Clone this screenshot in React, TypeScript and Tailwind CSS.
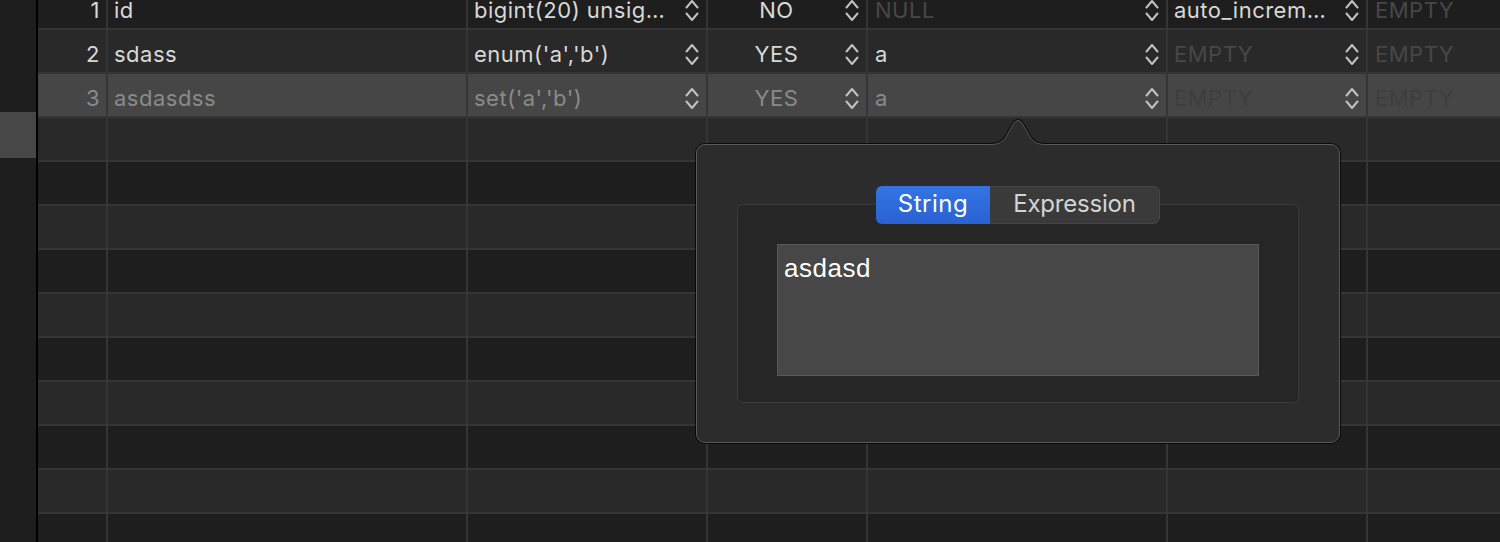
import React from "react";

type Cell = { text: string; muted?: boolean };
type Row = {
  num: string;
  name: string;
  type: string;
  nullable: string;
  def: Cell;
  extra: Cell;
  last: Cell;
};

const rows: Row[] = [
  {
    num: "1",
    name: "id",
    type: "bigint(20) unsig…",
    nullable: "NO",
    def: { text: "NULL", muted: true },
    extra: { text: "auto_increm…" },
    last: { text: "EMPTY", muted: true },
  },
  {
    num: "2",
    name: "sdass",
    type: "enum('a','b')",
    nullable: "YES",
    def: { text: "a" },
    extra: { text: "EMPTY", muted: true },
    last: { text: "EMPTY", muted: true },
  },
  {
    num: "3",
    name: "asdasdss",
    type: "set('a','b')",
    nullable: "YES",
    def: { text: "a" },
    extra: { text: "EMPTY", muted: true },
    last: { text: "EMPTY", muted: true },
  },
];

const SELECTED = 2;
const TOTAL_ROWS = 13;

function Stepper() {
  return (
    <svg width="14" height="23" viewBox="0 0 14 23" className="shrink-0" fill="none">
      <path d="M1.5 8.5 L7 2 L12.5 8.5" stroke="#c2c2c2" strokeWidth="2" strokeLinecap="round" strokeLinejoin="round" />
      <path d="M1.5 14.5 L7 21 L12.5 14.5" stroke="#c2c2c2" strokeWidth="2" strokeLinecap="round" strokeLinejoin="round" />
    </svg>
  );
}

function textColor(selected: boolean, muted?: boolean) {
  if (muted) return selected ? "text-[#3e3e3e]" : "text-[#474747]";
  return selected ? "text-[#8a8a8a]" : "text-[#d8d8d8]";
}

function TableRow({ row, index }: { row?: Row; index: number }) {
  const selected = index === SELECTED;
  const bg = selected ? "bg-[#464646]" : index % 2 === 1 ? "bg-[#292929]" : "bg-[#1e1e1e]";
  const cell = "h-full flex items-center border-r-2 border-[#353535] pt-[6px] whitespace-nowrap overflow-hidden";

  return (
    <div className={`flex h-[44px] shrink-0 border-b-2 border-[#353535] ${bg}`}>
      <div className={`${cell} w-[70px] justify-end pr-[6px] ${textColor(selected)}`}>{row?.num}</div>
      <div className={`${cell} w-[360px] pl-[6px] ${textColor(selected)}`}>{row?.name}</div>
      <div className={`${cell} w-[240px] pl-[6px] pr-[7px] gap-2`}>
        <span className={`flex-1 overflow-hidden ${textColor(selected)}`}>{row?.type}</span>
        {row && <Stepper />}
      </div>
      <div className={`${cell} w-[160px] pr-[7px]`}>
        <span className={`flex-1 text-center ${textColor(selected)}`}>{row?.nullable}</span>
        {row && <Stepper />}
      </div>
      <div className={`${cell} w-[300px] pl-[7px] pr-[7px]`}>
        <span className={`flex-1 ${textColor(selected, row?.def.muted)}`}>{row?.def.text}</span>
        {row && <Stepper />}
      </div>
      <div className={`${cell} w-[200px] pl-[6px] pr-[7px] gap-2`}>
        <span className={`flex-1 overflow-hidden ${textColor(selected, row?.extra.muted)}`}>{row?.extra.text}</span>
        {row && <Stepper />}
      </div>
      <div className={`h-full flex items-center pt-[6px] flex-1 pl-[7px] ${textColor(selected, row?.last.muted)}`}>
        {row?.last.text}
      </div>
    </div>
  );
}

function Popover() {
  return (
    <div className="absolute left-[696px] top-[144px] w-[644px] h-[299px] rounded-[9px] border border-[#5a5a5a] bg-[#2c2c2c] shadow-[0_0_0_1px_rgba(0,0,0,0.75)] px-[40px] pt-[59px]">
      <svg className="absolute left-[293px] top-[-26px]" width="56" height="28" viewBox="0 0 56 28" fill="none">
        <path d="M0 25.5 C9 25.5 12 23 16 18 L24 4 Q28 -1 32 4 L40 18 C44 23 47 25.5 56 25.5" stroke="#0b0b0b" strokeWidth="3" />
        <path d="M0 25.5 C9 25.5 12 23 16 18 L24 4 Q28 -1 32 4 L40 18 C44 23 47 25.5 56 25.5 L56 28 L0 28 Z" fill="#2c2c2c" />
        <path d="M0 25.5 C9 25.5 12 23 16 18 L24 4 Q28 -1 32 4 L40 18 C44 23 47 25.5 56 25.5" stroke="#5a5a5a" strokeWidth="1" />
      </svg>

      <div className="relative h-[199px] rounded-[6px] border border-[#3b3b3b] bg-[#262626] pt-[39px] px-[39px]">
        {/* String / Expression toggle */}
        <div className="absolute left-1/2 top-[-19px] -translate-x-1/2 flex h-[38px] w-[284px] overflow-hidden rounded-[6px] text-[24px] font-['Inter',sans-serif]">
          <div className="flex w-[114px] items-center justify-center bg-gradient-to-b from-[#3474e2] to-[#2a62d2] text-white pb-[2px]">
            String
          </div>
          <div className="flex flex-1 items-center justify-center rounded-r-[6px] border border-l-0 border-[#464646] bg-[#3a3a3a] text-[#d4d4d4] pb-[2px] tracking-[-0.2px]">
            Expression
          </div>
        </div>

        <div className="h-[132px] border border-[#585858] bg-[#474747] px-[6px] pt-[8px] text-[26px] leading-[30px] text-white font-['Liberation_Sans',Arial,sans-serif]">
          asdasd
        </div>
      </div>
    </div>
  );
}

export default function App() {
  return (
    <div className="relative flex h-[542px] w-[1500px] overflow-hidden bg-[#1e1e1e] text-[22px] tracking-[0.5px] font-['Inter',sans-serif]">
      <div className="w-[38px] shrink-0 border-r-2 border-black bg-[#1e1e1e] pt-[112px]">
        <div className="h-[46px] bg-[#474747]" />
      </div>
      <div className="flex flex-1 flex-col -mt-[14px]">
        {Array.from({ length: TOTAL_ROWS }).map((_, i) => (
          <TableRow key={i} index={i} row={rows[i]} />
        ))}
      </div>
      <Popover />
    </div>
  );
}
